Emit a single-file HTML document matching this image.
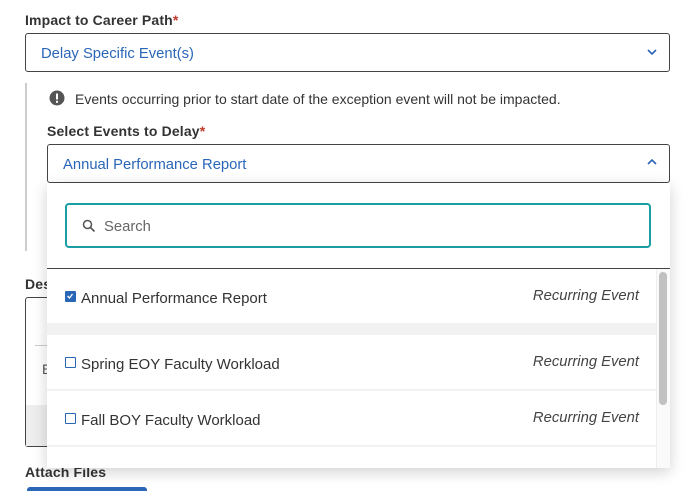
<!DOCTYPE html>
<html><head><style>
*{box-sizing:border-box;margin:0;padding:0}
body{width:693px;height:489px;overflow:hidden;background:#fff;font-family:"Liberation Sans",sans-serif;position:relative;color:#333}
.a{position:absolute}
.lbl{font-weight:bold;font-size:14px;color:#333;letter-spacing:0.15px}
.req{color:#c0392b}
.sel{border:1px solid #444;border-radius:3px;background:#fff}
.blue{color:#2a66b8;font-size:14.8px}
.row{position:absolute;left:47px;width:609px;background:#fff}
.cb{position:absolute;left:18px;width:11px;height:11px;border:1.5px solid #2a66b8;border-radius:1px}
.rt{position:absolute;left:34px;font-size:15px;color:#333}
.rec{position:absolute;right:17px;font-size:14.8px;font-style:italic;color:#444}
</style></head><body>
<div class="a lbl" style="left:25px;top:12px">Impact to Career Path<span class="req">*</span></div>
<div class="a sel" style="left:25px;top:33px;width:645px;height:39px"></div>
<div class="a blue" style="left:41px;top:46px">Delay Specific Event(s)</div>
<svg class="a" style="left:646px;top:48px" width="12" height="8"><path d="M2 2l4 4 4-4" stroke="#2a66b8" stroke-width="1.6" fill="none"/></svg>
<div class="a" style="left:25px;top:83px;width:2px;height:168px;background:#ccc"></div>
<svg class="a" style="left:49px;top:90px" width="16" height="16"><circle cx="8" cy="8" r="7.5" fill="#555"/><rect x="7" y="3.5" width="2" height="6" fill="#fff"/><rect x="7" y="10.8" width="2" height="2" fill="#fff"/></svg>
<div class="a" style="left:75px;top:91px;font-size:14px;color:#333">Events occurring prior to start date of the exception event will not be impacted.</div>
<div class="a lbl" style="left:47px;top:123px">Select Events to Delay<span class="req">*</span></div>
<div class="a sel" style="left:47px;top:144px;width:623px;height:39px"></div>
<div class="a blue" style="left:63px;top:157px">Annual Performance Report</div>
<svg class="a" style="left:646px;top:158px" width="12" height="8"><path d="M2 6l4-4 4 4" stroke="#2a66b8" stroke-width="1.6" fill="none"/></svg>
<div class="a lbl" style="left:25px;top:276px">Des</div>
<div class="a" style="left:25px;top:297px;width:30px;height:150px;border:1px solid #444;border-radius:3px"></div>
<div class="a" style="left:35px;top:345px;width:20px;height:1px;background:#ccc"></div>
<div class="a" style="left:26px;top:405px;width:29px;height:41px;background:#eee"></div>
<div class="a" style="left:42px;top:361px;font-size:14px;color:#555">E</div>
<div class="a lbl" style="left:25px;top:464px">Attach Files</div>
<div class="a" style="left:27px;top:487px;width:120px;height:4px;background:#2a66b8;border-radius:3px 3px 0 0"></div>
<div class="a" style="left:47px;top:183px;width:623px;height:285px;background:#fff;box-shadow:0 4px 14px rgba(0,0,0,.18)"></div>
<div class="a" style="left:65px;top:203px;width:586px;height:45px;border:2.5px solid #1a9ea5;border-radius:4px"></div>
<svg class="a" style="left:82px;top:219px" width="14" height="14"><circle cx="5.5" cy="5.5" r="4" stroke="#555" stroke-width="1.5" fill="none"/><path d="M8.5 8.5l4 4" stroke="#555" stroke-width="1.6"/></svg>
<div class="a" style="left:104px;top:219px;font-size:14.8px;color:#666">Search</div>
<div class="a" style="left:47px;top:268px;width:623px;height:1px;background:#444"></div>
<div class="a" style="left:47px;top:323px;width:609px;height:145px;background:#f2f2f2"></div>
<div class="row" style="top:269px;height:54px"><div class="cb" style="top:22px;background:#2a66b8"><svg width="8" height="8" style="position:absolute;left:0;top:0"><path d="M1.5 4l2 2 3-4" stroke="#fff" stroke-width="1.3" fill="none"/></svg></div><div class="rt" style="top:21px">Annual Performance Report</div><div class="rec" style="top:19px">Recurring Event</div></div>
<div class="row" style="top:335px;height:54px"><div class="cb" style="top:22px"></div><div class="rt" style="top:21px">Spring EOY Faculty Workload</div><div class="rec" style="top:19px">Recurring Event</div></div>
<div class="row" style="top:391px;height:54px"><div class="cb" style="top:22px"></div><div class="rt" style="top:21px">Fall BOY Faculty Workload</div><div class="rec" style="top:19px">Recurring Event</div></div>
<div class="row" style="top:447px;height:21px"></div>
<div class="a" style="left:656px;top:269px;width:14px;height:199px;background:#fafafa;border-left:1px solid #eee"></div>
<div class="a" style="left:659px;top:272px;width:8px;height:133px;background:#c1c1c1;border-radius:4px"></div>
</body></html>
